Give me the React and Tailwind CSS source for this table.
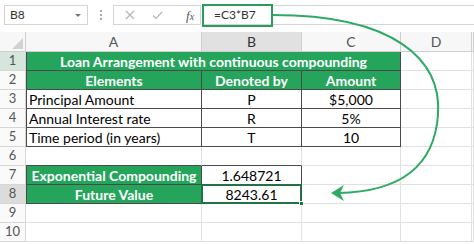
import React from 'react';

const GREEN = 'bg-[#25a55c]';

const rowNums = [1, 2, 3, 4, 5, 6, 7, 8, 9, 10];

const RowHead = ({ n }) => (
    <div
        className={`h-[19px] flex items-center justify-center border-r border-b border-[#d6d6d6] text-[13px] text-[#555] ${
            n === 8 ? 'bg-[#dcdcdc] text-[#333]' : n === 1 ? 'bg-[#d5e6dc]' : 'bg-[#fafafa]'
        }`}
    >
        {n}
    </div>
);

const Grid = ({ className = '', children }) => (
    <div className={`h-[19px] flex items-center border-r border-b border-[#e1e1e1] text-[14px] text-black ${className}`}>
        {children}
    </div>
);

const Tbl = ({ className = '', children }) => (
    <div className={`h-[19px] flex items-center justify-center border-r border-b border-[#4a4a4a] text-[14px] pt-px ${className}`}>
        {children}
    </div>
);

const App = () => {
    return (
        <div className="w-[474px] h-[244px] bg-white relative overflow-hidden font-['Lato',sans-serif] select-none">
            {/* formula bar */}
            <div className="h-[32px] flex items-start pt-[5px] pl-[4px]">
                <div className="w-[84px] h-[20px] border border-[#d4d4d4] flex items-center justify-between pl-[5px] pr-[6px] text-[12px] text-[#333]">
                    <span>B8</span>
                    <span className="w-0 h-0 border-l-[3px] border-r-[3px] border-t-[3px] border-l-transparent border-r-transparent border-t-[#777]" />
                </div>
                <div className="w-[25px] h-[20px] flex flex-col items-center justify-center gap-[2px]">
                    <span className="w-[2px] h-[2px] bg-[#aaa]" />
                    <span className="w-[2px] h-[2px] bg-[#aaa]" />
                    <span className="w-[2px] h-[2px] bg-[#aaa]" />
                </div>
                <div className="w-[88px] h-[20px] border border-[#d4d4d4] flex items-center pl-[11px] gap-[17px]">
                    <svg width="10" height="10" viewBox="0 0 10 10">
                        <path d="M1 1 L9 9 M9 1 L1 9" stroke="#b5b5b5" strokeWidth="1.2" fill="none" />
                    </svg>
                    <svg width="11" height="9" viewBox="0 0 11 9">
                        <path d="M1 4.5 L4 7.5 L10 1" stroke="#b5b5b5" strokeWidth="1.2" fill="none" />
                    </svg>
                    <span className="font-['Liberation_Serif',serif] italic text-[13px] text-[#555] leading-none ml-[6px]">
                        f<span className="text-[10px]">x</span>
                    </span>
                </div>
                <div className="flex-1 h-[20px] border-y border-[#d4d4d4] ml-[2px] flex items-center pl-[11px] text-[12px] text-[#333]">
                    =C3*B7
                </div>
            </div>
            <div className="absolute left-[202px] top-[4px] w-[71px] h-[23px] border-2 border-[#2a9d5c]" />

            {/* sheet */}
            <div className="grid grid-cols-[26px_176px_100px_99px_71px_1fr]">
                {/* column headers */}
                <div className="h-[20px] bg-[#f7f7f7] border-r border-b border-[#cfcfcf] flex items-end justify-end pr-[2px] pb-[2px]">
                    <span className="w-0 h-0 border-l-[11px] border-b-[11px] border-l-transparent border-b-[#d2d2d2]" />
                </div>
                {['A', 'B', 'C', 'D', ''].map((c) => (
                    <div
                        key={c || 'E'}
                        className={`h-[20px] flex items-center justify-center border-r border-b border-[#cfcfcf] text-[14px] ${
                            c === 'B' ? 'bg-[#e1e1e1] text-[#333]' : 'bg-[#f7f7f7] text-[#555]'
                        }`}
                    >
                        {c}
                    </div>
                ))}

                {/* row 1 */}
                <RowHead n={1} />
                <div className={`col-span-3 h-[19px] pt-px flex items-center justify-center border-l border-r border-b border-[#4a4a4a] ${GREEN} text-white font-bold text-[14px]`}>
                    Loan Arrangement with continuous compounding
                </div>
                <Grid />
                <Grid />

                {/* row 2 */}
                <RowHead n={2} />
                <Tbl className={`border-l ${GREEN} text-white font-bold`}>Elements</Tbl>
                <Tbl className={`${GREEN} text-white font-bold`}>Denoted by</Tbl>
                <Tbl className={`${GREEN} text-white font-bold`}>Amount</Tbl>
                <Grid />
                <Grid />

                {/* rows 3-5 */}
                {[
                    ['Principal Amount', 'P', '$5,000', 3],
                    ['Annual Interest rate', 'R', '5%', 4],
                    ['Time period (in years)', 'T', '10', 5],
                ].map(([a, b, c, n]) => (
                    <React.Fragment key={n}>
                        <RowHead n={n} />
                        <Tbl className="border-l justify-start pl-[2px]">{a}</Tbl>
                        <Tbl>{b}</Tbl>
                        <Tbl>{c}</Tbl>
                        <Grid />
                        <Grid />
                    </React.Fragment>
                ))}

                {/* row 6 */}
                <RowHead n={6} />
                <Grid className="border-b-[#4a4a4a]" />
                <Grid className="border-b-[#4a4a4a]" />
                <Grid />
                <Grid />
                <Grid />

                {/* row 7 */}
                <RowHead n={7} />
                <Tbl className={`border-l ${GREEN} text-white font-bold`}>Exponential Compounding</Tbl>
                <Tbl>1.648721</Tbl>
                <Grid />
                <Grid />
                <Grid />

                {/* row 8 */}
                <RowHead n={8} />
                <Tbl className={`border-l ${GREEN} text-white font-bold`}>Future Value</Tbl>
                <div className="relative h-[19px] pt-px flex items-center justify-center border-r border-b border-[#4a4a4a] text-[14px]">
                    8243.61
                    <div className="absolute -left-px -top-px -right-px -bottom-px border-2 border-[#217346]" />
                    <div className="absolute -right-[3px] -bottom-[3px] w-[5px] h-[5px] bg-[#217346] border border-white" />
                </div>
                <Grid />
                <Grid />
                <Grid />

                {/* rows 9-10 */}
                {rowNums.slice(8).map((n) => (
                    <React.Fragment key={n}>
                        <RowHead n={n} />
                        <Grid />
                        <Grid />
                        <Grid />
                        <Grid />
                        <Grid />
                    </React.Fragment>
                ))}
            </div>

            {/* callout arrow */}
            <svg className="absolute left-0 top-0 pointer-events-none" width="474" height="244" viewBox="0 0 474 244">
                <path
                    d="M273 15 C 395 15, 442 60, 438 115 C 434 170, 395 192, 338 193"
                    stroke="#2eaa64"
                    strokeWidth="2"
                    fill="none"
                />
                <path d="M331 193 L344 185 L340 193 L344 201 Z" fill="#2eaa64" />
            </svg>
        </div>
    );
};

export default App;
